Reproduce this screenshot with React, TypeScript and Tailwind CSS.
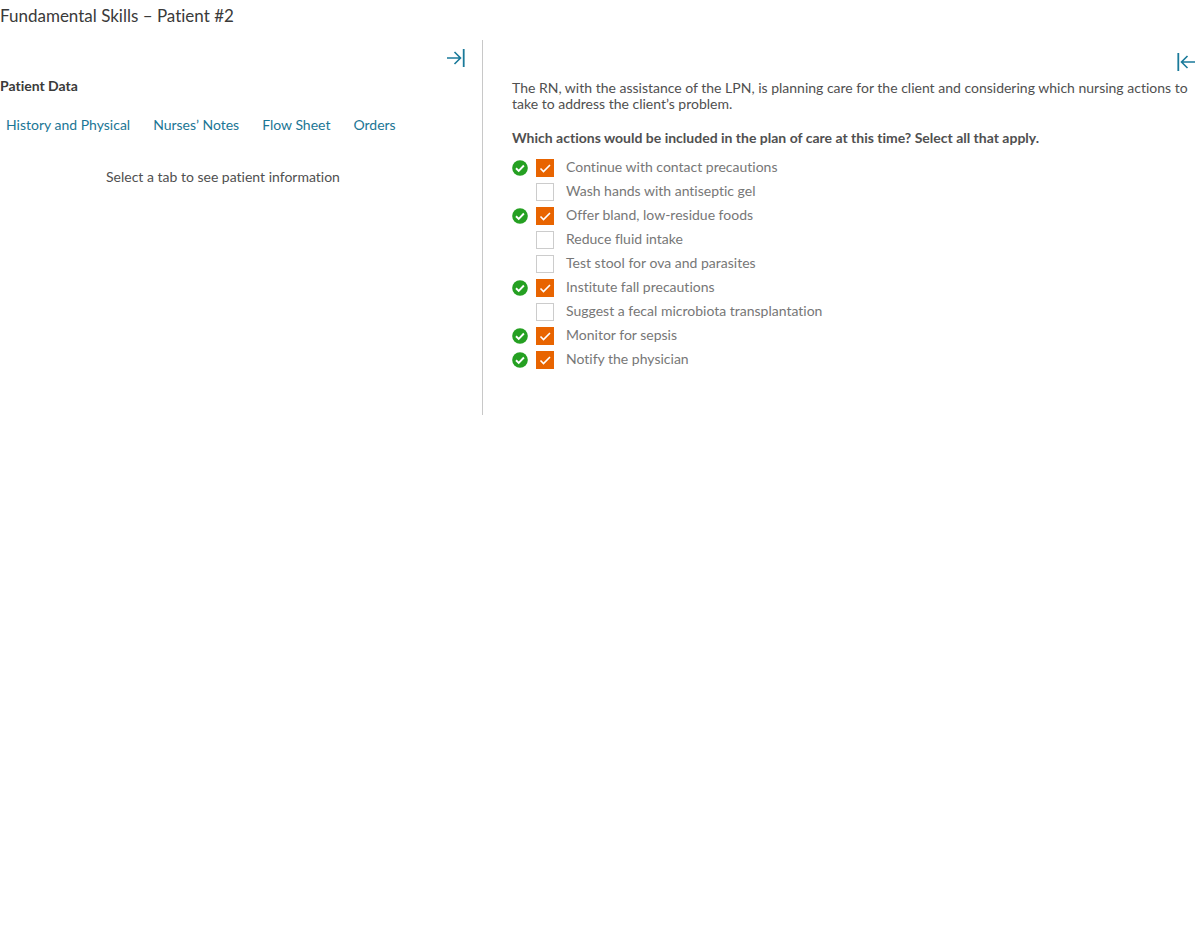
import React, { useState } from 'react';

const tabs = ['History and Physical', 'Nurses’ Notes', 'Flow Sheet', 'Orders'];

const actions = [
  { id: 'contact', label: 'Continue with contact precautions', correct: true },
  { id: 'wash', label: 'Wash hands with antiseptic gel', correct: false },
  { id: 'foods', label: 'Offer bland, low-residue foods', correct: true },
  { id: 'fluid', label: 'Reduce fluid intake', correct: false },
  { id: 'stool', label: 'Test stool for ova and parasites', correct: false },
  { id: 'fall', label: 'Institute fall precautions', correct: true },
  { id: 'fecal', label: 'Suggest a fecal microbiota transplantation', correct: false },
  { id: 'sepsis', label: 'Monitor for sepsis', correct: true },
  { id: 'physician', label: 'Notify the physician', correct: true },
];

const CollapseIcon = ({ className = '' }: { className?: string }) => (
  <svg
    width="18"
    height="18"
    viewBox="0 0 18 18"
    fill="none"
    stroke="currentColor"
    className={className}
    aria-hidden="true"
  >
    <path d="M0 9h13.5M7.5 3l6 6-6 6" strokeWidth="1.6" />
    <path d="M16.7 0v18" strokeWidth="1.8" />
  </svg>
);

const CorrectIcon = () => (
  <svg width="16" height="16" viewBox="0 0 16 16" fill="none" role="img" aria-label="Correct">
    <circle cx="8" cy="8" r="7.8" fill="#25a022" />
    <path d="M4 8.300l2.700 2.600 5.200-5.400" stroke="#fff" strokeWidth="1.9" />
  </svg>
);

export default function App() {
  const [selected, setSelected] = useState<string[]>(
    actions.filter((a) => a.correct).map((a) => a.id)
  );

  const toggle = (id: string) =>
    setSelected((prev) => (prev.includes(id) ? prev.filter((s) => s !== id) : [...prev, id]));

  return (
    <div className="min-h-screen bg-white font-['Lato','Open_Sans',sans-serif] text-sm text-[#505050] [font-variant-ligatures:no-common-ligatures]">
      <header className="h-10 pt-1">
        <h1 className="text-[17px] leading-6 text-[#3a3a3a]">Fundamental Skills – Patient #2</h1>
      </header>

      <div className="grid min-h-[375px] grid-cols-[483fr_717fr]">
        {/* Patient chart */}
        <section className="border-r border-[#c8c8c8]">
          <div className="flex h-9 justify-end pt-2 pr-[17px]">
            <button type="button" aria-label="Collapse patient data" className="h-5 text-[#1a7a9a]">
              <CollapseIcon />
            </button>
          </div>
          <h2 className="font-bold leading-5 text-[#3a3a3a]">Patient Data</h2>
          <nav className="mt-[19px] flex gap-[23px] px-1.5 leading-5">
            {tabs.map((tab) => (
              <button key={tab} type="button" className="whitespace-nowrap text-[#1b7695]">
                {tab}
              </button>
            ))}
          </nav>
          <p className="mt-8 pr-9 text-center leading-5">Select a tab to see patient information</p>
        </section>

        {/* Question */}
        <section className="pl-[29px]">
          <div className="flex h-10 justify-end pt-3 pr-[5px]">
            <button type="button" aria-label="Collapse question" className="h-5 text-[#1a7a9a]">
              <CollapseIcon className="rotate-180" />
            </button>
          </div>
          <p className="pr-1 leading-4">
            The RN, with the assistance of the LPN, is planning care for the client and considering
            which nursing actions to take to address the client’s problem.
          </p>
          <p className="mt-4 font-bold leading-5">
            Which actions would be included in the plan of care at this time? Select all that apply.
          </p>
          <ul className="mt-2">
            {actions.map((action) => (
              <li key={action.id} className="flex h-6 items-center">
                <span className="w-6 shrink-0">{action.correct && <CorrectIcon />}</span>
                <span className="relative flex">
                  <input
                    id={action.id}
                    type="checkbox"
                    checked={selected.includes(action.id)}
                    onChange={() => toggle(action.id)}
                    className="peer size-[18px] appearance-none border border-[#cccccc] bg-white checked:border-[#e86400] checked:bg-[#e86400]"
                  />
                  <svg
                    viewBox="0 0 18 18"
                    fill="none"
                    className="pointer-events-none absolute inset-0 hidden size-[18px] peer-checked:block"
                    aria-hidden="true"
                  >
                    <path d="M4.500 9.500l3 3 6.500-6.500" stroke="#fff" strokeWidth="1.6" />
                  </svg>
                </span>
                <label htmlFor={action.id} className="pb-0.5 pl-3 leading-5 text-[#777777]">
                  {action.label}
                </label>
              </li>
            ))}
          </ul>
        </section>
      </div>
    </div>
  );
}
